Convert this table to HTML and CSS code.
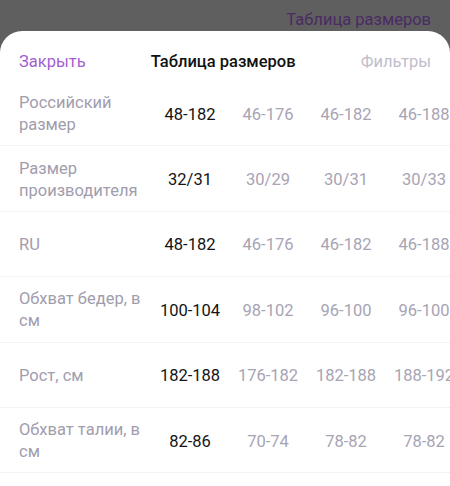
FILE: index.html
```html
<!DOCTYPE html>
<html lang="ru">
<head>
<meta charset="utf-8">
<link rel="stylesheet" href="styles.css">
</head>
<body>
<div class="backdrop">
  <span class="backdrop-title">Таблица размеров</span>
</div>
<div class="sheet">
  <div class="header">
    <span class="close">Закрыть</span>
    <span class="title">Таблица размеров</span>
    <span class="filters">Фильтры</span>
  </div>
  <div class="table">
    <div class="row"><div class="label">Российский размер</div><div class="v cur">48-182</div><div class="v">46-176</div><div class="v">46-182</div><div class="v">46-188</div></div>
    <div class="row"><div class="label">Размер производителя</div><div class="v cur">32/31</div><div class="v">30/29</div><div class="v">30/31</div><div class="v">30/33</div></div>
    <div class="row"><div class="label">RU</div><div class="v cur">48-182</div><div class="v">46-176</div><div class="v">46-182</div><div class="v">46-188</div></div>
    <div class="row"><div class="label">Обхват бедер, в см</div><div class="v cur">100-104</div><div class="v">98-102</div><div class="v">96-100</div><div class="v">96-100</div></div>
    <div class="row"><div class="label">Рост, см</div><div class="v cur">182-188</div><div class="v">176-182</div><div class="v">182-188</div><div class="v">188-192</div></div>
    <div class="row"><div class="label">Обхват талии, в см</div><div class="v cur">82-86</div><div class="v">70-74</div><div class="v">78-82</div><div class="v">78-82</div></div>
    <div class="row"><div class="label">&nbsp;</div><div class="v cur">&nbsp;</div></div>
  </div>
</div>
</body>
</html>
```
FILE: styles.css
```css
html, body {
  margin: 0;
  padding: 0;
  width: 450px;
  height: 486px;
  overflow: hidden;
  background: #5f5f5f;
  font-family: Roboto, "Noto Sans", sans-serif;
}
.backdrop {
  height: 31px;
  display: flex;
  justify-content: flex-end;
  align-items: center;
  padding-right: 19px;
  box-sizing: border-box;
}
.backdrop-title {
  font-size: 16.5px;
  color: #4a2b63;
  padding-top: 7px;
}
.sheet {
  background: #fff;
  border-radius: 22px 22px 0 0;
  height: 455px;
  overflow: hidden;
}
.header {
  height: 50px;
  box-sizing: border-box;
  padding: 21px 19px 0 19px;
  display: flex;
  justify-content: space-between;
  align-items: flex-start;
  font-size: 16.5px;
  line-height: 19px;
}
.close { color: #a35fd0; }
.title { color: #111; font-weight: 500; }
.filters { color: #c1bdcb; }
.table {
  width: 470px;
}
.row {
  display: grid;
  grid-template-columns: 151px 78px 78px 78px 78px;
  height: 65.4px;
  box-sizing: border-box;
  padding-top: 2px;
  border-bottom: 1px solid #f3f3f5;
  align-items: center;
}
.label {
  padding-left: 19px;
  padding-right: 4px;
  font-size: 16.5px;
  line-height: 22px;
  color: #a19dad;
}
.v {
  text-align: center;
  font-size: 16.5px;
  color: #a7a4b4;
  white-space: nowrap;
}
.v.cur { color: #141414; }
```
